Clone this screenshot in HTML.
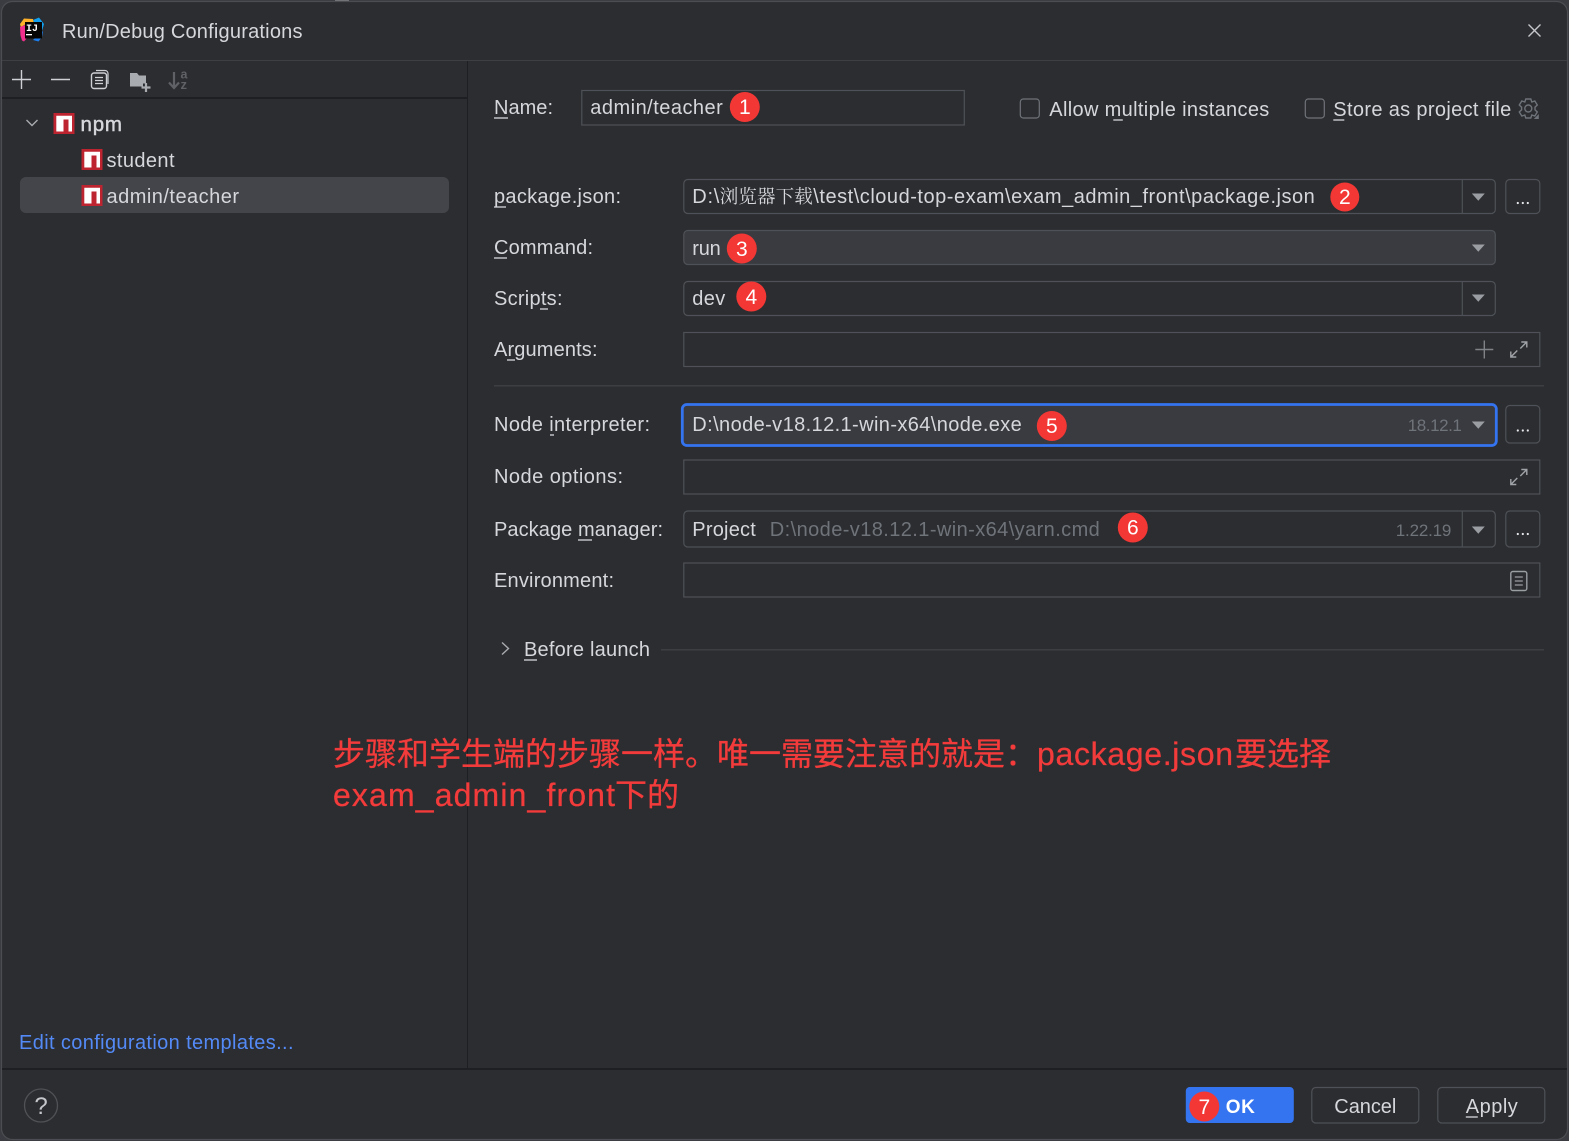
<!DOCTYPE html>
<html lang="zh">
<head>
<meta charset="utf-8">
<title>Run/Debug Configurations</title>
<style>
html,body{margin:0;padding:0;background:#2b2d30;width:1569px;height:1141px;overflow:hidden}
svg{display:block}
text{font-family:"Liberation Sans","Noto Sans CJK SC",sans-serif;font-size:20px;fill:#d5d7dc}
.g{fill:#6f737a}
.v{font-size:17px;fill:#6f737a}
.f{fill:none;stroke:#4e5157;stroke-width:1.2}
.a{fill:#393b40;stroke:#4e5157;stroke-width:1.2}
.d{stroke:#4e5157;stroke-width:1.2}
.u{stroke:#d5d7dc;stroke-width:1.3}
.c{fill:#f33735}
.n{fill:#fff;font-size:21px;text-anchor:middle}
.i{fill:none;stroke:#a0a3a8;stroke-width:1.4}
text.r{fill:#f33b3b;font-size:32px;stroke:#f33b3b;stroke-width:.3}
</style>
</head>
<body>
<svg xmlns="http://www.w3.org/2000/svg" width="1569" height="1141" viewBox="0 0 1569 1141">
<defs>
<g id="npm"><rect x="0" y="0" width="21" height="21" fill="#bd2430"/><path d="M2.800 2.800H18.500V18.500H15V6.500H10V18.500H2.800z" fill="#fff"/></g>
<g id="arr"><path d="M-6.500 -3.500H6.500L0 3.800z" fill="#9a9da2"/></g>
<g id="exp"><path class="i" d="M2 17L8.500 10.500M2 11.500V17H7.500M18 2L11.500 8.500M12.500 2H18V7.500"/></g>
<g id="dots"><circle cx="-5" cy="0" r="1.100" fill="#e6e8ec"/><circle cx="0" cy="0" r="1.100" fill="#e6e8ec"/><circle cx="5" cy="0" r="1.100" fill="#e6e8ec"/></g>
</defs>

<!-- window -->
<rect width="1569" height="1141" fill="#3a3c42"/>
<rect x="335" y="0" width="14" height="2" fill="#77797d"/>
<rect x="1.500" y="1.500" width="1566" height="1138" rx="11" fill="#2b2d30" stroke="#4b4d52" stroke-width="1.200"/>

<!-- structural lines -->
<rect x="2" y="60" width="1565" height="1" fill="#3d3f44"/>
<rect x="2" y="97" width="465" height="2" fill="#1e1f22"/>
<rect x="467" y="61" width="1" height="1007" fill="#1e1f22"/>
<rect x="2" y="1068" width="1565" height="2" fill="#1e1f22"/>

<!-- logo -->
<path d="M24 18.500l9 .5 1 4-10 2-3 3-1-4z" fill="#fdb02a"/>
<path d="M20 27l5-2 2 13-3 3.500-2-1-1.500-5z" fill="#f0308c"/>
<path d="M33 20l6-2.500 5 6.500-2 7-4-2z" fill="#11a0f0"/>
<path d="M36 37l7-6-1 6-3.500 4.500-5.500-1.500z" fill="#1d7ef0"/>
<rect x="25" y="22" width="17" height="16.500" fill="#050505"/>
<text x="26" y="31" style='font-family:"Liberation Mono",monospace;font-size:10px;font-weight:bold;fill:#fff'>IJ</text>
<rect x="26" y="34" width="6" height="1.300" fill="#fff"/>

<text x="62" y="38" textLength="240.500" lengthAdjust="spacing">Run/Debug Configurations</text>
<path d="M1528.500 24.500L1540.500 36.500M1540.500 24.500L1528.500 36.500" stroke="#c5c7cc" stroke-width="1.400" fill="none"/>

<!-- toolbar -->
<path d="M12 79.500H31M21.500 70V89" stroke="#ced0d6" stroke-width="1.400"/>
<path d="M51 79.500H70" stroke="#ced0d6" stroke-width="1.400"/>
<rect x="91.500" y="73" width="15" height="15.500" rx="2.500" fill="#2b2d30" stroke="#ced0d6" stroke-width="1.400"/>
<path d="M96 70.500h9a3 3 0 0 1 3 3V84" fill="none" stroke="#ced0d6" stroke-width="1.200"/>
<path d="M95 77.500h8M95 80.500h8M95 83.500h8" stroke="#ced0d6" stroke-width="1.200"/>
<path d="M130 73h7l2 2.500h7v8h-3v3h-13z" fill="#a8abb0"/>
<path d="M141.500 87.500h9M146 83v9" stroke="#a8abb0" stroke-width="2.200"/>
<path d="M174 72v15M169 82.500l5 5.500 5-5.500" fill="none" stroke="#5f6166" stroke-width="2.200"/>
<text x="180.500" y="78.500" style="font-size:12.500px;font-weight:bold;fill:#5f6166">a</text>
<text x="180.500" y="89" style="font-size:13px;font-weight:bold;fill:#5f6166">z</text>

<!-- tree -->
<path d="M26.500 120L32 125.500 37.500 120" fill="none" stroke="#a8abb0" stroke-width="1.400"/>
<use href="#npm" x="53.500" y="113"/>
<text x="80.500" y="131" textLength="41.500" lengthAdjust="spacing" style="font-size:20.500px;stroke:#d5d7dc;stroke-width:.45">npm</text>
<use href="#npm" x="81.500" y="149"/>
<text x="106.500" y="167" textLength="68" lengthAdjust="spacing">student</text>
<rect x="20" y="177" width="429" height="36" rx="6" fill="#43454a"/>
<use href="#npm" x="81.500" y="185"/>
<text x="106.500" y="203" textLength="132.500" lengthAdjust="spacing">admin/teacher</text>

<text x="19" y="1049" textLength="274.500" lengthAdjust="spacing" style="fill:#548af7">Edit configuration templates...</text>

<!-- labels -->
<text x="494" y="114" textLength="59" lengthAdjust="spacing">Name:</text>
<path class="u" d="M494 118H508"/>
<text x="494" y="203" textLength="127" lengthAdjust="spacing">package.json:</text>
<path class="u" d="M494 207H506"/>
<text x="494" y="254" textLength="99" lengthAdjust="spacing">Command:</text>
<path class="u" d="M494 258H507"/>
<text x="494" y="305" textLength="68.500" lengthAdjust="spacing">Scripts:</text>
<path class="u" d="M540 309H548"/>
<text x="494" y="356" textLength="103.500" lengthAdjust="spacing">Arguments:</text>
<path class="u" d="M507 360H515"/>
<text x="494" y="431" textLength="156" lengthAdjust="spacing">Node interpreter:</text>
<path class="u" d="M550 435H554"/>
<text x="494" y="483" textLength="129" lengthAdjust="spacing">Node options:</text>
<text x="494" y="536" textLength="169" lengthAdjust="spacing">Package manager:</text>
<path class="u" d="M578 540H592"/>
<text x="494" y="587" textLength="120" lengthAdjust="spacing">Environment:</text>

<!-- controls -->
<g transform="translate(0.800,0)">
<rect class="f" x="581" y="90.500" width="382.500" height="34.500"/>
<text x="589.500" y="114" textLength="132.500" lengthAdjust="spacing">admin/teacher</text>

<rect class="f" x="1019.500" y="99" width="19" height="19" rx="3" style="stroke:#6f737a"/>
<text x="1048.500" y="116" textLength="220" lengthAdjust="spacing">Allow multiple instances</text>
<path class="u" d="M1112.500 120H1122"/>
<rect class="f" x="1304.500" y="99" width="19" height="19" rx="3" style="stroke:#6f737a"/>
<text x="1332.500" y="116" textLength="178" lengthAdjust="spacing">Store as project file</text>
<path class="u" d="M1332.500 120H1343.500"/>
<g transform="translate(1527.500,108.500)" fill="none" stroke="#6f737a" stroke-width="1.400">
<circle r="3.500"/>
<path d="M-2.500 -9.500h5l1 3 3-1 2.500 4-2.300 2.200v2.600l2.300 2.200-2.500 4-3-1-1 3h-5l-1-3-3 1-2.500-4 2.300-2.200v-2.600l-2.300-2.200 2.500-4 3 1z"/>
</g>
<path d="M1538 114v5h-5z" fill="#6f737a"/>

<!-- package.json -->
<rect class="f" x="683" y="179.500" width="811.500" height="34" rx="4"/>
<path class="d" d="M1461.500 180V213"/>
<use href="#arr" x="1477.500" y="197"/>
<text x="691.500" y="203" textLength="27" lengthAdjust="spacing">D:\</text>
<text x="719" y="203" textLength="93" lengthAdjust="spacing" style='font-family:"Noto Serif CJK SC",serif;font-size:18.500px'>浏览器下载</text>
<text x="812.500" y="203" textLength="501.500" lengthAdjust="spacing">\test\cloud-top-exam\exam_admin_front\package.json</text>
<rect class="f" x="1505" y="179.500" width="34" height="34" rx="4"/>
<use href="#dots" x="1522" y="203"/>

<!-- command -->
<rect class="a" x="683" y="230.500" width="811.500" height="34" rx="4"/>
<use href="#arr" x="1477.500" y="248"/>
<text x="691.500" y="255" textLength="28.500" lengthAdjust="spacing">run</text>

<!-- scripts -->
<rect class="f" x="683" y="281.500" width="811.500" height="34" rx="4"/>
<path class="d" d="M1461.500 282V315"/>
<use href="#arr" x="1477.500" y="298"/>
<text x="691.500" y="305" textLength="33" lengthAdjust="spacing">dev</text>

<!-- arguments -->
<rect class="f" x="683" y="332.500" width="856" height="34"/>
<path d="M1474.500 349.500H1492.500M1483.500 340.500V358.500" stroke="#7f8287" stroke-width="1.400"/>
<use href="#exp" x="1508" y="340"/>

<!-- node interpreter -->
<rect x="681.500" y="404.500" width="814" height="41" rx="4.500" fill="#393b40" stroke="#3574f0" stroke-width="2.800"/>
<text x="691.500" y="431" textLength="329.500" lengthAdjust="spacing">D:\node-v18.12.1-win-x64\node.exe</text>
<text class="v" x="1407" y="431" textLength="54" lengthAdjust="spacing">18.12.1</text>
<use href="#arr" x="1477.500" y="425"/>
<rect class="f" x="1505" y="405.500" width="34" height="37.500" rx="4"/>
<use href="#dots" x="1522" y="430.500"/>

<!-- node options -->
<rect class="f" x="683" y="460" width="856" height="34"/>
<use href="#exp" x="1508" y="467.500"/>

<!-- package manager -->
<rect class="f" x="683" y="511" width="811.500" height="36" rx="4"/>
<path class="d" d="M1461.500 511.500V546.500"/>
<use href="#arr" x="1477.500" y="530"/>
<text x="691.500" y="536" textLength="63.500" lengthAdjust="spacing">Project</text>
<text class="g" x="769" y="536" textLength="330" lengthAdjust="spacing">D:\node-v18.12.1-win-x64\yarn.cmd</text>
<text class="v" x="1395" y="536" textLength="55.500" lengthAdjust="spacing">1.22.19</text>
<rect class="f" x="1505" y="511" width="34" height="36" rx="4"/>
<use href="#dots" x="1522" y="534"/>

<!-- environment -->
<rect class="f" x="683" y="563" width="856" height="34"/>
<rect x="1510" y="571.500" width="16" height="19" rx="2" fill="none" stroke="#9a9da2" stroke-width="1.400"/>
<path d="M1514 577h8M1514 581h8M1514 585h8" stroke="#9a9da2" stroke-width="1.200"/>

<!-- badges -->
<circle class="c" cx="744" cy="107" r="15"/><text class="n" x="744" y="114">1</text>
<circle class="c" cx="1344" cy="197" r="14.500"/><text class="n" x="1344" y="204">2</text>
<circle class="c" cx="741" cy="248.500" r="15"/><text class="n" x="741" y="256">3</text>
<circle class="c" cx="750.500" cy="296.500" r="15"/><text class="n" x="750.500" y="304">4</text>
<circle class="c" cx="1051" cy="426" r="15"/><text class="n" x="1051" y="433">5</text>
<circle class="c" cx="1132" cy="527.500" r="15"/><text class="n" x="1132" y="534.500">6</text>

<!-- bottom buttons -->
<rect x="1185" y="1087" width="108" height="36" rx="4" fill="#3574f0"/>
<text x="1225" y="1113" textLength="29" lengthAdjust="spacing" style="fill:#fff;font-weight:bold;font-size:19px">OK</text>
<circle class="c" cx="1203.500" cy="1106.500" r="15"/><text class="n" x="1203.500" y="1114">7</text>
<rect class="f" x="1311" y="1087.500" width="107" height="35.500" rx="4"/>
<text x="1333.500" y="1113" textLength="62" lengthAdjust="spacing">Cancel</text>
<rect class="f" x="1437" y="1087.500" width="107" height="35.500" rx="4"/>
<text x="1465" y="1113" textLength="52" lengthAdjust="spacing">Apply</text>
<path class="u" d="M1465 1117H1477"/>
</g>

<rect x="494" y="385" width="1050" height="1.500" fill="#3c3e43"/>

<!-- before launch -->
<path d="M502 642.500L508.500 648.500 502 654.500" fill="none" stroke="#a8abb0" stroke-width="1.400"/>
<text x="524" y="656" textLength="126" lengthAdjust="spacing">Before launch</text>
<path class="u" d="M524 660H537"/>
<rect x="661" y="649" width="883" height="1.500" fill="#3c3e43"/>

<!-- annotation -->
<text class="r" x="333" y="765">步骤和学生端的步骤一样。唯一需要注意的就是：</text>
<text class="r" x="1037" y="765" textLength="196" lengthAdjust="spacing">package.json</text>
<text class="r" x="1235" y="765">要选择</text>
<text class="r" x="333" y="806" textLength="282" lengthAdjust="spacing">exam_admin_front</text>
<text class="r" x="615" y="806">下的</text>

<!-- help -->
<circle cx="41" cy="1105.500" r="16.500" fill="none" stroke="#505257" stroke-width="1.300"/>
<text x="41" y="1114" text-anchor="middle" style="font-size:24px;fill:#c5c7cc">?</text>
</svg>
</body>
</html>
